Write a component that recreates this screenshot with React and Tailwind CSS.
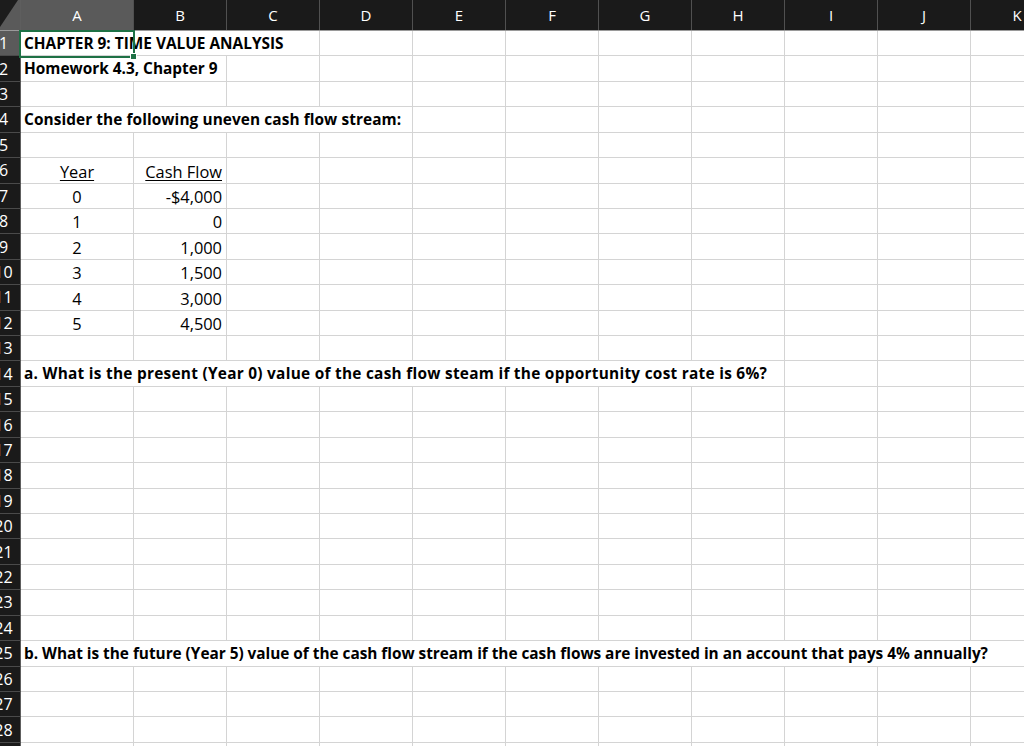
import React from "react";

const COLS = ["A", "B", "C", "D", "E", "F", "G", "H", "I", "J", "K"];
const COL_W = { A: "w-[113px]" };
const ROW_COUNT = 29;

// Cell content by row: span = number of columns covered by overflowing text
const ROWS = {
  1: { span: 3, text: "CHAPTER 9: TIME VALUE ANALYSIS", track: "" },
  2: { span: 2, text: "Homework 4.3, Chapter 9", track: "" },
  4: { span: 4, text: "Consider the following uneven cash flow stream:", track: "tracking-[0.08px]" },
  14: {
    span: 8,
    text: "a. What is the present (Year 0) value of the cash flow steam if the opportunity cost rate is 6%?",
    track: "tracking-[0.27px]",
  },
  25: {
    span: 11,
    text: "b. What is the future (Year 5) value of the cash flow stream if the cash flows are invested in an account that pays 4% annually?",
    track: "tracking-[-0.03px]",
  },
};

const TABLE = {
  6: ["Year", "Cash Flow"],
  7: ["0", "-$4,000"],
  8: ["1", "0"],
  9: ["2", "1,000"],
  10: ["3", "1,500"],
  11: ["4", "3,000"],
  12: ["5", "4,500"],
};

const cellFont = { fontFamily: "'Open Sans', 'Liberation Sans', sans-serif" };
const headFont = { fontFamily: "'Open Sans', 'Liberation Sans', sans-serif" };

function RowHeader({ n }) {
  const selected = n === 1;
  return (
    <div
      className={`w-[21px] shrink-0 h-full overflow-hidden border-r border-b border-r-[#5e5e5e] border-b-[#4a4a4a] flex items-center ${
        selected ? "bg-[#5a5a5a]" : "bg-[#1a1a1a]"
      }`}
    >
      <div
        className="-ml-[12px] w-[31px] shrink-0 text-center text-white text-[16px] leading-none"
        style={headFont}
      >
        {n}
      </div>
    </div>
  );
}

function Cell({ col, children, align = "left" }) {
  const w = COL_W[col] || "w-[93px]";
  const a =
    align === "center" ? "justify-center" : align === "right" ? "justify-end pr-[4px]" : "justify-start pl-[3px]";
  return (
    <div
      className={`${w} shrink-0 h-full border-r border-b border-[#d4d4d4] flex items-end pb-[1px] ${a}`}
    >
      {children}
    </div>
  );
}

function Row({ n }) {
  const info = ROWS[n];
  const table = TABLE[n];
  let cells = [];
  if (info) {
    const spanCols = COLS.slice(0, info.span);
    const width = spanCols.reduce((s, c) => s + (c === "A" ? 113 : 93), 0);
    cells.push(
      <div
        key="span"
        className="shrink-0 h-full border-r border-b border-[#d4d4d4] flex items-end pb-[1.5px] pl-[3px]"
        style={{ width }}
      >
        <span
          className={`whitespace-nowrap text-black text-[15.4px] leading-[20px] font-bold ${info.track}`}
          style={cellFont}
        >
          {info.text}
        </span>
      </div>
    );
    COLS.slice(info.span).forEach((c) => cells.push(<Cell key={c} col={c} />));
  } else {
    COLS.forEach((c) => {
      let content = null;
      let align = "left";
      if (table && c === "A") {
        align = "center";
        content = table[0];
      } else if (table && c === "B") {
        align = "right";
        content = table[1];
      }
      cells.push(
        <Cell key={c} col={c} align={align}>
          {content != null && (
            <span
              className={`whitespace-nowrap text-black text-[16.4px] leading-[21px] ${n === 6 ? "underline underline-offset-2" : ""}`}
              style={cellFont}
            >
              {content}
            </span>
          )}
        </Cell>
      );
    });
  }
  return (
    <div className="flex h-[25.43px] shrink-0">
      <RowHeader n={n} />
      {cells}
    </div>
  );
}

function ColumnHeaders() {
  return (
    <div className="flex h-[31px] shrink-0 border-b border-[#9a9a9a]">
      <div className="w-[21px] shrink-0 h-full bg-[#5a5a5a] border-r border-[#5e5e5e]">
        <svg width="20" height="30" viewBox="0 0 20 30" className="block">
          <polygon points="0,0 18,0 0,27" fill="#1c1c1c" />
        </svg>
      </div>
      {COLS.map((c) => (
        <div
          key={c}
          className={`${COL_W[c] || "w-[93px]"} shrink-0 h-full flex items-center justify-center border-r border-[#505050] text-white text-[15px] font-medium ${
            c === "A" ? "bg-[#5a5a5a]" : "bg-[#1a1a1a]"
          }`}
          style={headFont}
        >
          {c}
        </div>
      ))}
    </div>
  );
}

export default function App() {
  const rows = [];
  for (let i = 1; i <= ROW_COUNT; i++) rows.push(<Row key={i} n={i} />);
  return (
    <div className="relative w-[1024px] h-[746px] overflow-hidden bg-white flex flex-col">
      <ColumnHeaders />
      {rows}
      {/* active cell outline with fill handle */}
      <div className="absolute left-[19px] top-[30px] w-[116px] h-[28px] border-2 border-[#1e7145] pointer-events-none" />
      <div className="absolute left-[130px] top-[53px] w-[7px] h-[7px] bg-[#1e7145] border border-white" />
    </div>
  );
}
